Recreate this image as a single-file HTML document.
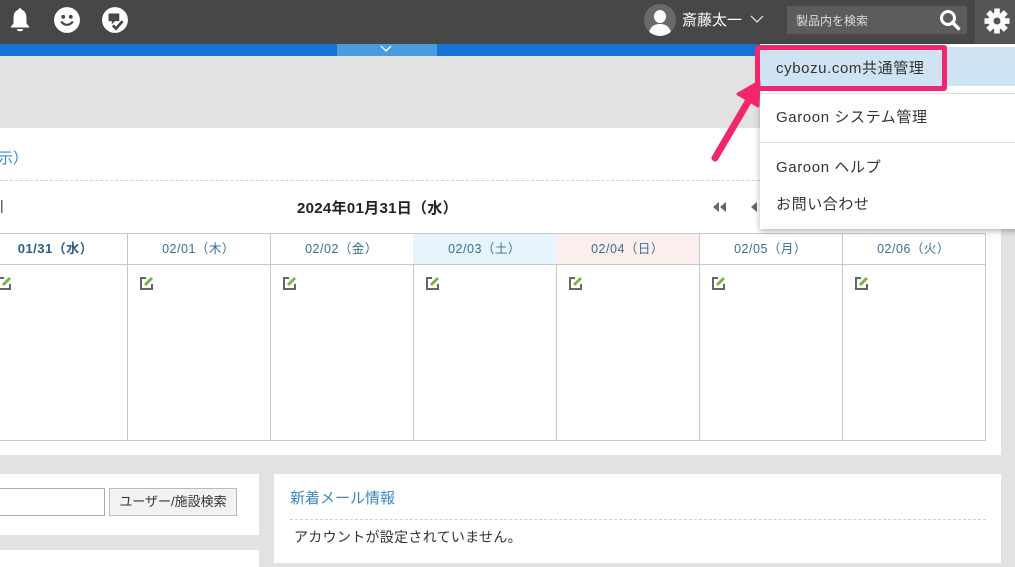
<!DOCTYPE html>
<html><head><meta charset="utf-8"><style>
*{margin:0;padding:0;box-sizing:border-box}
body{width:1015px;height:567px;overflow:hidden;background:#e2e2e2;font-family:"Liberation Sans","Noto Sans CJK JP",sans-serif;position:relative;color:#333}
.a{position:absolute}
.top{left:0;top:0;width:1015px;height:44px;background:#474747}
.blue{left:0;top:44px;width:1015px;height:12px;background:#1673d6}
.hd{position:absolute;top:233px;height:32px;font-size:12.5px;color:#3a6f8f;text-align:center;line-height:30px;border-right:1px solid #c8c8c8;border-bottom:1px solid #c8c8c8;border-top:1px solid #c8c8c8;letter-spacing:.5px}
.col{position:absolute;top:265px;height:176px;border-right:1px solid #c8c8c8;border-bottom:1px solid #c8c8c8}
.mi{position:absolute;left:776px;font-size:15px;color:#333;letter-spacing:.6px}
</style></head><body>
<div class="a top"></div>
<div class="a blue"></div>
<div class="a" style="left:337px;top:44px;width:100px;height:12px;background:#4b9be0"></div>
<svg class="a" style="left:380px;top:45px" width="12" height="8"><path d="M1 1L6 6L11 1" stroke="#fff" fill="none" stroke-width="1.3"/></svg>
<svg class="a" style="left:6px;top:6px" width="28" height="28" viewBox="0 0 26 26"><path d="M13 2c1 0 1.5 1 1.5 1.5C18 4.5 19 8 19 11v5l3 4H4l3-4v-5c0-3 1-6.5 4.5-7.5C11.5 3 12 2 13 2z" fill="#fff"/><path d="M10 21.5h6a3 2 0 0 1-6 0z" fill="#fff"/></svg>
<svg class="a" style="left:53px;top:6px" width="28" height="28" viewBox="0 0 26 26"><circle cx="13" cy="13" r="12" fill="#fff"/><circle cx="9.5" cy="10" r="1.8" fill="#474747"/><circle cx="16.5" cy="10" r="1.8" fill="#474747"/><path d="M7.5 14.5q5.5 6 11 0" stroke="#474747" stroke-width="2" fill="none"/></svg>
<svg class="a" style="left:101px;top:6px" width="28" height="28" viewBox="0 0 26 26"><circle cx="13" cy="13" r="12" fill="#fff"/><path d="M7 7h10v7h-4l-3 3v-3H7z" fill="#474747"/><path d="M11 18l3 3 6-7" stroke="#474747" stroke-width="2.5" fill="none"/></svg>
<div class="a" style="left:644px;top:4px;width:32px;height:32px;border-radius:50%;background:#6a6a6a;overflow:hidden"><div class="a" style="left:10px;top:6px;width:12px;height:13px;border-radius:50%;background:#fff"></div><div class="a" style="left:5px;top:20px;width:22px;height:16px;border-radius:10px 10px 0 0;background:#fff"></div></div>
<div class="a" style="left:682px;top:9px;font-size:15px;color:#fff">斎藤太一</div>
<svg class="a" style="left:750px;top:14px" width="14" height="10"><path d="M1 2L7 8L13 2" stroke="#ddd" fill="none" stroke-width="1.3"/></svg>
<div class="a" style="left:787px;top:6px;width:180px;height:28px;background:#5c5c5c"></div>
<div class="a" style="left:796px;top:12px;font-size:12px;color:#ddd">製品内を検索</div>
<svg class="a" style="left:939px;top:9px" width="22" height="22" viewBox="0 0 22 22"><circle cx="9" cy="9" r="6.5" stroke="#fff" stroke-width="3" fill="none"/><path d="M13.5 13.5l6 6" stroke="#fff" stroke-width="3.5" stroke-linecap="round"/></svg>
<div class="a" style="left:975px;top:0;width:40px;height:44px;background:#555"></div>
<svg class="a" style="left:983px;top:7px" width="28" height="28" viewBox="0 0 28 28"><g fill="#fff" transform="translate(14 14)"><circle r="8.5"/><rect x="-2.8" y="-12.5" width="5.6" height="25"/><rect x="-2.8" y="-12.5" width="5.6" height="25" transform="rotate(45)"/><rect x="-2.8" y="-12.5" width="5.6" height="25" transform="rotate(90)"/><rect x="-2.8" y="-12.5" width="5.6" height="25" transform="rotate(135)"/><circle r="3.5" fill="#555"/></g></svg>
<div class="a" style="left:0;top:128px;width:1001px;height:327px;background:#fff"></div>
<div class="a" style="left:-2px;top:147px;font-size:15px;color:#3a88c0">示）</div>
<div class="a" style="left:0;top:180px;width:985px;border-top:1px dashed #d0d0d0"></div>
<div class="a" style="left:0;top:197px;font-size:14px">|</div>
<div class="a" style="left:297px;top:197px;font-size:15px;font-weight:bold;color:#222;letter-spacing:.3px">2024年01月31日（水）</div>
<svg class="a" style="left:712px;top:201px" width="16" height="12"><path d="M7 1L1 6L7 11zM14 1L8 6L14 11z" fill="#666"/></svg>
<svg class="a" style="left:749px;top:201px" width="10" height="12"><path d="M8 1L2 6L8 11z" fill="#666"/></svg>
<div class="hd" style="left:-16px;width:144px;font-weight:bold;color:#2a5f8a;font-size:13px">01/31（水）</div>
<div class="hd" style="left:127px;width:144px;">02/01（木）</div>
<div class="hd" style="left:270px;width:144px;">02/02（金）</div>
<div class="hd" style="left:413px;width:144px;background:#e6f4fd">02/03（土）</div>
<div class="hd" style="left:556px;width:144px;background:#fdeeee">02/04（日）</div>
<div class="hd" style="left:699px;width:144px;">02/05（月）</div>
<div class="hd" style="left:842px;width:144px;">02/06（火）</div>
<div class="col" style="left:-16px;width:144px"></div>
<div class="col" style="left:127px;width:144px"></div>
<div class="col" style="left:270px;width:144px"></div>
<div class="col" style="left:413px;width:144px"></div>
<div class="col" style="left:556px;width:144px"></div>
<div class="col" style="left:699px;width:144px"></div>
<div class="col" style="left:842px;width:144px"></div>
<svg width="0" height="0" style="position:absolute"><defs><g id="e"><path d="M7 2H2v11h11V8" stroke="#666" stroke-width="2" fill="none"/><path d="M6 9l7-7" stroke="#7ab33a" stroke-width="2.8"/></g></defs></svg>
<svg class="a" style="left:-3px;top:276px" width="15" height="15"><use href="#e"/></svg>
<svg class="a" style="left:139px;top:276px" width="15" height="15"><use href="#e"/></svg>
<svg class="a" style="left:282px;top:276px" width="15" height="15"><use href="#e"/></svg>
<svg class="a" style="left:425px;top:276px" width="15" height="15"><use href="#e"/></svg>
<svg class="a" style="left:568px;top:276px" width="15" height="15"><use href="#e"/></svg>
<svg class="a" style="left:711px;top:276px" width="15" height="15"><use href="#e"/></svg>
<svg class="a" style="left:854px;top:276px" width="15" height="15"><use href="#e"/></svg>
<div class="a" style="left:0;top:474px;width:259px;height:61px;background:#fff"></div>
<div class="a" style="left:0;top:550px;width:259px;height:17px;background:#fff"></div>
<div class="a" style="left:-2px;top:488px;width:107px;height:28px;border:1px solid #aaa;background:#fff"></div>
<div class="a" style="left:109px;top:488px;width:128px;height:28px;border:1px solid #bbb;background:#f2f2f2;font-size:13px;text-align:center;line-height:26px;color:#333">ユーザー/施設検索</div>
<div class="a" style="left:274px;top:474px;width:727px;height:89px;background:#fff"></div>
<div class="a" style="left:290px;top:487px;font-size:15px;color:#3a88c0">新着メール情報</div>
<div class="a" style="left:290px;top:519px;width:696px;border-top:1px dashed #d0d0d0"></div>
<div class="a" style="left:294px;top:527px;font-size:14px;letter-spacing:.3px">アカウントが設定されていません。</div>
<div class="a" style="left:760px;top:44px;width:260px;height:185px;background:#fff;box-shadow:0 2px 6px rgba(0,0,0,.3)"></div>
<div class="a" style="left:760px;top:47px;width:255px;height:39px;background:#cfe3f2"></div>
<div class="a" style="left:760px;top:93px;width:255px;border-top:1px solid #ddd"></div>
<div class="a" style="left:760px;top:142px;width:255px;border-top:1px solid #ddd"></div>
<div class="mi" style="top:57px">cybozu.com共通管理</div>
<div class="mi" style="top:106px">Garoon システム管理</div>
<div class="mi" style="top:156px">Garoon ヘルプ</div>
<div class="mi" style="top:193px">お問い合わせ</div>
<div class="a" style="left:755px;top:45px;width:192px;height:46px;border:5px solid #f2266d;border-radius:3px"></div>
<svg class="a" style="left:705px;top:78px" width="60" height="90"><path d="M10 80L44 22" stroke="#f2266d" stroke-width="7" stroke-linecap="round"/><path d="M54 4L33 16L53 28z" fill="#f2266d" stroke="#f2266d" stroke-width="3" stroke-linejoin="round"/></svg>
</body></html>
